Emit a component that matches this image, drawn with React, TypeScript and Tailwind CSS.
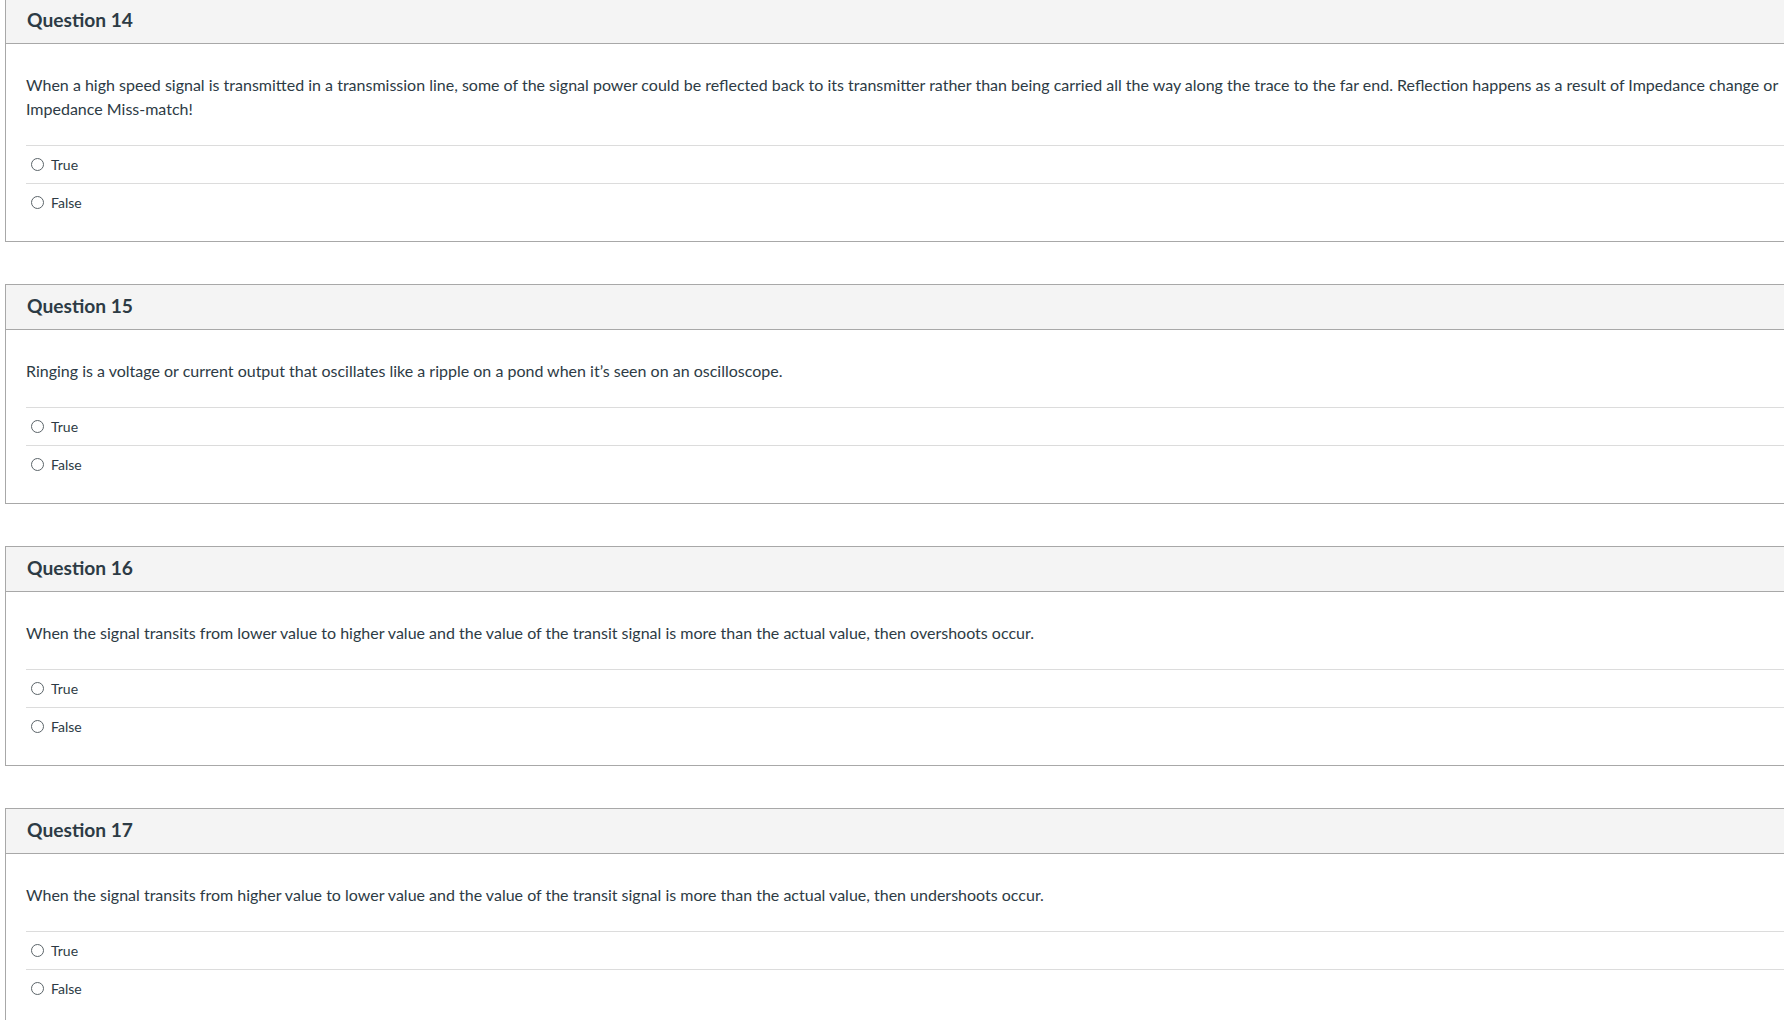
import React from 'react';

const questions = [
  {
    number: 14,
    text: 'When a high speed signal is transmitted in a transmission line, some of the signal power could be reflected back to its transmitter rather than being carried all the way along the trace to the far end. Reflection happens as a result of Impedance change or Impedance Miss-match!',
  },
  {
    number: 15,
    text: 'Ringing is a voltage or current output that oscillates like a ripple on a pond when it’s seen on an oscilloscope.',
  },
  {
    number: 16,
    text: 'When the signal transits from lower value to higher value and the value of the transit signal is more than the actual value, then overshoots occur.',
  },
  {
    number: 17,
    text: 'When the signal transits from higher value to lower value and the value of the transit signal is more than the actual value, then undershoots occur.',
  },
];

const answers = ['True', 'False'];

const Question = ({ number, text }: { number: number; text: string }) => (
  <div className="w-[1830px] ml-[5px] border border-[#a8a8a8] bg-white">
    <div className="h-[45px] flex items-center pl-[21px] pb-[3px] bg-[#f4f4f4] border-b border-[#a8a8a8]">
      <h2 className="text-[19.2px] font-bold text-[#2d3b45] leading-none">Question {number}</h2>
    </div>
    <div className="pt-[29px] pb-[20px] pl-[20px] pr-[15px]">
      <p className="text-[16px] leading-[24px] text-[#2d3b45]">{text}</p>
      <div className="mt-[24px]">
        {answers.map((a) => (
          <label key={a} className="flex items-center h-[38px] border-t border-[#dcdcdc] cursor-pointer">
            <span className="ml-[5px] w-[13px] h-[13px] rounded-full border border-[#5b6469] bg-white shrink-0" />
            <span className="ml-[7px] text-[14px] text-[#2d3b45] leading-none">{a}</span>
          </label>
        ))}
      </div>
    </div>
  </div>
);

export default function App() {
  return (
    <div
      className="w-[1784px] h-[1020px] overflow-hidden bg-white"
      style={{ fontFamily: 'Lato, "Liberation Sans", Arial, sans-serif' }}
    >
      <div className="-mt-[2px] flex flex-col gap-[42px]">
        {questions.map((q) => (
          <Question key={q.number} number={q.number} text={q.text} />
        ))}
      </div>
    </div>
  );
}
